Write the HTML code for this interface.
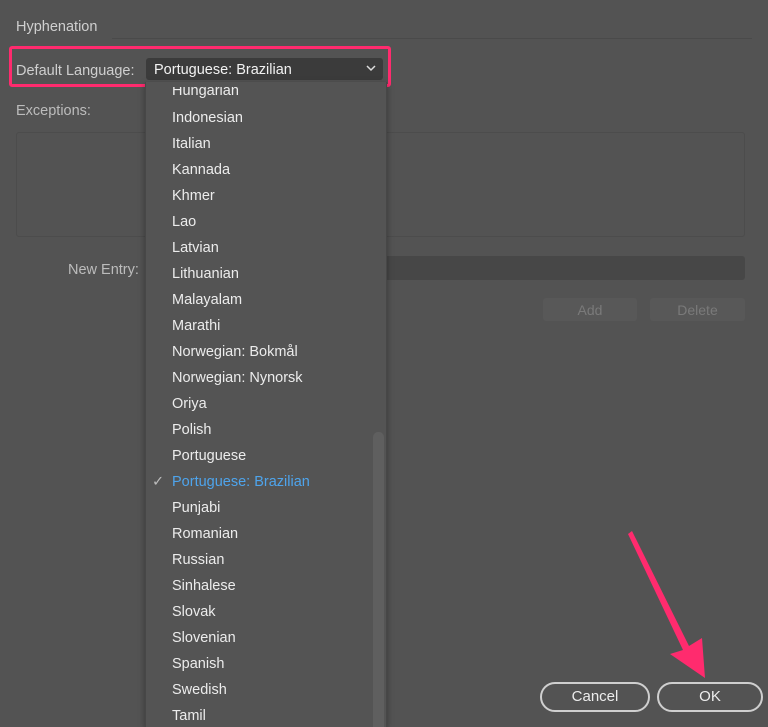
<!DOCTYPE html>
<html style="overflow:hidden;height:727px"><head><style>
html,body{overflow:hidden}
body{margin:0;width:768px;height:727px;background:#535353;font-family:"Liberation Sans",sans-serif;color:#d6d6d6;position:relative;overflow:hidden;font-size:14px}
.a{position:absolute}
.menu{left:145px;top:82px;width:240px;height:660px;background:#545454;border-left:1px solid #474747;border-right:1px solid #474747;box-shadow:0 2px 6px rgba(0,0,0,.35)}
.it{position:absolute;left:26px;color:#ececec;font-size:14.5px;line-height:20px}
.btn{border:2px solid #cfcfcf;border-radius:16px;color:#ececec;text-align:center;line-height:26px;font-size:15px}
</style></head><body>
<div class="a" style="left:16px;top:19px;font-size:14.5px;color:#cfcfcf">Hyphenation</div>
<div class="a" style="left:112px;top:38px;width:640px;height:1px;background:#4a4a4a"></div>
<div class="a" style="left:16px;top:63px;font-size:14.5px;color:#cfcfcf">Default Language:</div>
<div class="a" style="left:146px;top:58px;width:237px;height:22px;background:#3b3b3b;border-radius:3px"></div>
<div class="a" style="left:154px;top:62px;font-size:14.5px;color:#f2f2f2">Portuguese: Brazilian</div>
<svg class="a" style="left:366px;top:64px" width="10" height="8"><path d="M1 2 L5 6 L9 2" stroke="#ddd" stroke-width="1.5" fill="none"/></svg>
<div class="a" style="left:9px;top:46px;width:382px;height:41px;border:3px solid #ff2b6e;border-radius:3px;box-sizing:border-box"></div>
<div class="a" style="left:16px;top:103px;font-size:14.5px;color:#bcbcbc">Exceptions:</div>
<div class="a" style="left:16px;top:132px;width:729px;height:105px;border:1px solid #4c4c4c;border-radius:3px;box-sizing:border-box"></div>
<div class="a" style="left:68px;top:262px;font-size:14.5px;color:#bcbcbc">New Entry:</div>
<div class="a" style="left:380px;top:256px;width:365px;height:24px;background:#474747;border-radius:3px"></div>
<div class="a" style="left:543px;top:298px;width:94px;height:23px;background:#585858;border-radius:3px;color:#7a7a7a;text-align:center;line-height:25px">Add</div>
<div class="a" style="left:650px;top:298px;width:95px;height:23px;background:#585858;border-radius:3px;color:#7a7a7a;text-align:center;line-height:25px">Delete</div>
<div class="a menu" style="height:645px">
<div class="a" style="left:227px;top:350px;width:11px;height:300px;background:#5f5f5f;border-radius:5px"></div>
<div class="it" style="top:-1px;clip-path:inset(6px 0 0 0)">Hungarian</div>
<div class="it" style="top:26px">Indonesian</div>
<div class="it" style="top:52px">Italian</div>
<div class="it" style="top:78px">Kannada</div>
<div class="it" style="top:104px">Khmer</div>
<div class="it" style="top:130px">Lao</div>
<div class="it" style="top:156px">Latvian</div>
<div class="it" style="top:182px">Lithuanian</div>
<div class="it" style="top:208px">Malayalam</div>
<div class="it" style="top:234px">Marathi</div>
<div class="it" style="top:260px">Norwegian: Bokmål</div>
<div class="it" style="top:286px">Norwegian: Nynorsk</div>
<div class="it" style="top:312px">Oriya</div>
<div class="it" style="top:338px">Polish</div>
<div class="it" style="top:364px">Portuguese</div>
<div class="it" style="top:390px;left:6px;color:#bbb">✓</div>
<div class="it" style="top:390px;color:#4ea4ec">Portuguese: Brazilian</div>
<div class="it" style="top:416px">Punjabi</div>
<div class="it" style="top:442px">Romanian</div>
<div class="it" style="top:468px">Russian</div>
<div class="it" style="top:494px">Sinhalese</div>
<div class="it" style="top:520px">Slovak</div>
<div class="it" style="top:546px">Slovenian</div>
<div class="it" style="top:572px">Spanish</div>
<div class="it" style="top:598px">Swedish</div>
<div class="it" style="top:624px">Tamil</div>
</div>
<div class="a btn" style="left:540px;top:682px;width:106px;height:26px">Cancel</div>
<div class="a btn" style="left:657px;top:682px;width:102px;height:26px">OK</div>
<svg class="a" style="left:0;top:0" width="768" height="727"><path d="M628 534 L632 531 L689 646 L702 638 L705 678 L670 654 L683 650 Z" fill="#ff2b6e"/></svg>
</body></html>
